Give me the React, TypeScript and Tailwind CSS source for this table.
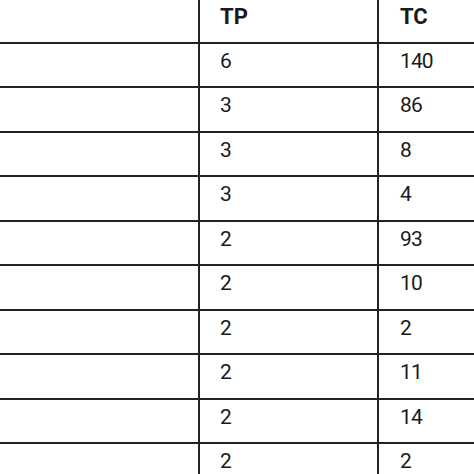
const rows: [number, number][] = [
  [6, 140],
  [3, 86],
  [3, 8],
  [3, 4],
  [2, 93],
  [2, 10],
  [2, 2],
  [2, 11],
  [2, 14],
  [2, 2],
];

export default function App() {
  return (
    <div
      className="w-[474px] h-[474px] overflow-hidden bg-white text-[#1a1a1a]"
      style={{ fontFamily: "Roboto, 'Liberation Sans', sans-serif" }}
    >
      {/* Header */}
      <div className="flex h-[44px] border-b-2 border-[#222]">
        <div className="w-[200px] shrink-0 border-r-2 border-[#222]" />
        <div className="w-[179px] shrink-0 border-r-2 border-[#222] pl-[20px] pt-[6px] text-[22px] font-bold leading-none">
          TP
        </div>
        <div className="flex-1 pl-[21px] pt-[6px] text-[22px] font-bold leading-none">
          TC
        </div>
      </div>

      {rows.map(([tp, tc], i) => (
        <div key={i} className="flex h-[44.44px] border-b-2 border-[#222]">
          <div className="w-[200px] shrink-0 border-r-2 border-[#222]" />
          <div className="w-[179px] shrink-0 border-r-2 border-[#222] pl-[20px] pt-[7px] text-[21px] leading-none tracking-[-0.9px]">
            {tp}
          </div>
          <div className="flex-1 pl-[21px] pt-[7px] text-[21px] leading-none tracking-[-0.9px]">
            {tc}
          </div>
        </div>
      ))}
    </div>
  );
}
